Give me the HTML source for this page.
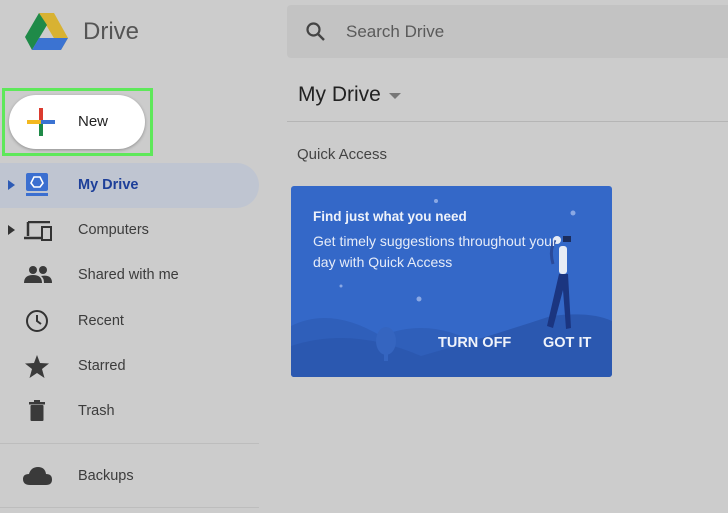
<!DOCTYPE html>
<html><head><meta charset="utf-8"><style>
*{margin:0;padding:0;box-sizing:border-box}
body{width:728px;height:513px;overflow:hidden;background:#cccccc;font-family:"Liberation Sans",Arial,sans-serif;position:relative;color:#3a3a3a}
.abs{position:absolute}
.nav{position:absolute;left:78px;font-size:14.5px;color:#3c3c3c}
</style></head><body>
<svg class="abs" style="left:25px;top:12px" width="44" height="40" viewBox="0 0 44 40">
<polygon points="14,1 29,1 43,26 36,38" fill="#d8b232"/>
<polygon points="14,1 0,25 7,38 22,13" fill="#1f8a48"/>
<polygon points="7,38 36,38 43,26 14,26" fill="#3b73d2"/>
</svg>
<div class="abs" style="left:83px;top:18px;font-size:24px;color:#555">Drive</div>
<div class="abs" style="left:287px;top:5px;width:441px;height:53px;background:#c3c3c3;border-radius:4px 0 0 4px"></div>
<svg class="abs" style="left:305px;top:21px" width="22" height="22" viewBox="0 0 22 22"><circle cx="8.5" cy="8.5" r="6" fill="none" stroke="#444" stroke-width="2.2"/><line x1="13" y1="13" x2="19" y2="19" stroke="#444" stroke-width="2.4"/></svg>
<div class="abs" style="left:346px;top:22px;font-size:17px;color:#5a5a5a">Search Drive</div>
<div class="abs" style="left:298px;top:83px;font-size:21px;color:#222">My Drive</div>
<svg class="abs" style="left:388px;top:92px" width="14" height="8"><polygon points="1,1 13,1 7,7" fill="#777"/></svg>
<div class="abs" style="left:287px;top:121px;width:441px;height:1px;background:#b5b5b5"></div>
<div class="abs" style="left:297px;top:146px;font-size:15px;color:#444">Quick Access</div>
<div class="abs" style="left:291px;top:186px;width:321px;height:191px;background:#3468c8;border-radius:3px;overflow:hidden">
<svg class="abs" style="left:0;top:0" width="321" height="191" viewBox="0 0 321 191">
<path d="M0,140 Q40,120 90,150 Q140,130 190,160 L190,191 L0,191Z" fill="#2f5fba"/>
<path d="M0,160 Q60,140 130,170 Q200,150 260,130 Q300,125 321,135 L321,191 L0,191Z" fill="#2b58b0"/>
<ellipse cx="95" cy="155" rx="10" ry="14" fill="#3565c0"/>
<rect x="93" y="160" width="4" height="15" fill="#3565c0"/>
<circle cx="145" cy="15" r="2" fill="#8aa8e4"/><circle cx="282" cy="27" r="2.5" fill="#8aa8e4"/>
<circle cx="50" cy="100" r="1.5" fill="#8aa8e4"/><circle cx="128" cy="113" r="2.5" fill="#8aa8e4"/>
<circle cx="266" cy="54" r="4" fill="#e8ecf5"/>
<rect x="268" y="60" width="8" height="28" rx="3" fill="#e8ecf5"/>
<rect x="272" y="50" width="8" height="6" fill="#1b2d5e"/>
<path d="M268,88 L277,88 L280,142 L275,143 L272,104 L262,142 L256,140 Z" fill="#1b3580"/>
<path d="M264,54 Q258,64 262,78" stroke="#2a4a9a" stroke-width="3" fill="none"/>
</svg>
<div class="abs" style="left:22px;top:23px;font-size:13.5px;font-weight:bold;color:#eef2fa">Find just what you need</div>
<div class="abs" style="left:22px;top:45px;font-size:14px;line-height:21px;color:#e6ecf8;width:262px">Get timely suggestions throughout your day with Quick Access</div>
<div class="abs" style="left:147px;top:149px;font-size:14.5px;font-weight:bold;color:#f0f3fa">TURN OFF</div>
<div class="abs" style="left:252px;top:149px;font-size:14.5px;font-weight:bold;color:#f0f3fa">GOT IT</div>
</div>
<div class="abs" style="left:2px;top:88px;width:151px;height:68px;border:3px solid #5ee85a"></div>
<div class="abs" style="left:9px;top:95px;width:136px;height:54px;background:#fff;border-radius:27px;box-shadow:0 1px 3px rgba(0,0,0,.3)"></div>
<div class="abs" style="left:39px;top:108px;width:4px;height:28px;background:linear-gradient(#db3b2f 50%,#1f8a48 50%)"></div>
<div class="abs" style="left:27px;top:120px;width:28px;height:4px;background:linear-gradient(90deg,#f3b81f 50%,#3b73d2 50%)"></div>
<div class="abs" style="left:78px;top:113px;font-size:15px;color:#222">New</div>
<div class="abs" style="left:0;top:163px;width:259px;height:45px;background:#bfc5d1;border-radius:0 23px 23px 0"></div>
<svg class="abs" style="left:8px;top:180px" width="8" height="10"><polygon points="0,0 7,5 0,10" fill="#2d5bb5"/></svg>
<svg class="abs" style="left:26px;top:173px" width="22" height="24" viewBox="0 0 22 24"><rect x="0" y="0" width="22" height="18" rx="2" fill="#3b6fd0"/><rect x="0" y="20" width="22" height="3" fill="#3b6fd0"/><polygon points="8,4 14,4 17,10 14,14 8,14 5,10" fill="none" stroke="#fff" stroke-width="1.6"/></svg>
<div class="nav" style="top:177px;color:#1d3f99;font-weight:bold">My Drive</div>
<svg class="abs" style="left:8px;top:225px" width="8" height="10"><polygon points="0,0 7,5 0,10" fill="#333"/></svg>
<svg class="abs" style="left:24px;top:221px" width="28" height="20" viewBox="0 0 28 20"><path d="M4,1 H26 M4,1 V15 M0,17 H17" stroke="#333" stroke-width="2.5" fill="none"/><rect x="18" y="6" width="9" height="13" fill="none" stroke="#333" stroke-width="2"/></svg>
<div class="nav" style="top:222px">Computers</div>
<svg class="abs" style="left:24px;top:266px" width="28" height="18" viewBox="0 0 28 18"><circle cx="9" cy="4" r="4" fill="#3a3a3a"/><circle cx="19" cy="4" r="4" fill="#3a3a3a"/><path d="M0,17 Q0,9 9,9 Q18,9 18,17Z" fill="#3a3a3a"/><path d="M17,10 Q28,8 28,17 H20 Q20,12 17,10Z" fill="#3a3a3a"/></svg>
<div class="nav" style="top:267px">Shared with me</div>
<svg class="abs" style="left:25px;top:309px" width="24" height="24" viewBox="0 0 24 24"><circle cx="12" cy="12" r="10" fill="none" stroke="#333" stroke-width="2"/><path d="M12,6 V12 L16,15" fill="none" stroke="#333" stroke-width="2"/></svg>
<div class="nav" style="top:313px">Recent</div>
<svg class="abs" style="left:25px;top:355px" width="24" height="23" viewBox="0 0 24 23"><polygon points="12,0 15,8 24,8.5 17,14 19.5,23 12,18 4.5,23 7,14 0,8.5 9,8" fill="#3a3a3a"/></svg>
<div class="nav" style="top:358px">Starred</div>
<svg class="abs" style="left:29px;top:400px" width="18" height="22" viewBox="0 0 18 22"><rect x="0" y="2" width="16" height="2.5" fill="#3a3a3a"/><rect x="5" y="0" width="6" height="2" fill="#3a3a3a"/><rect x="1.5" y="5" width="13" height="16" rx="1" fill="#3a3a3a"/></svg>
<div class="nav" style="top:403px">Trash</div>
<div class="abs" style="left:0;top:443px;width:259px;height:1px;background:#bdbdbd"></div>
<svg class="abs" style="left:23px;top:466px" width="29" height="19" viewBox="0 0 29 19"><path d="M7,19 Q0,19 0,13 Q0,8 6,8 Q8,1 15,1 Q22,1 23,8 Q29,8 29,13.5 Q29,19 23,19Z" fill="#3a3a3a"/></svg>
<div class="nav" style="top:468px">Backups</div>
<div class="abs" style="left:0;top:507px;width:259px;height:1px;background:#bdbdbd"></div>
</body></html>
